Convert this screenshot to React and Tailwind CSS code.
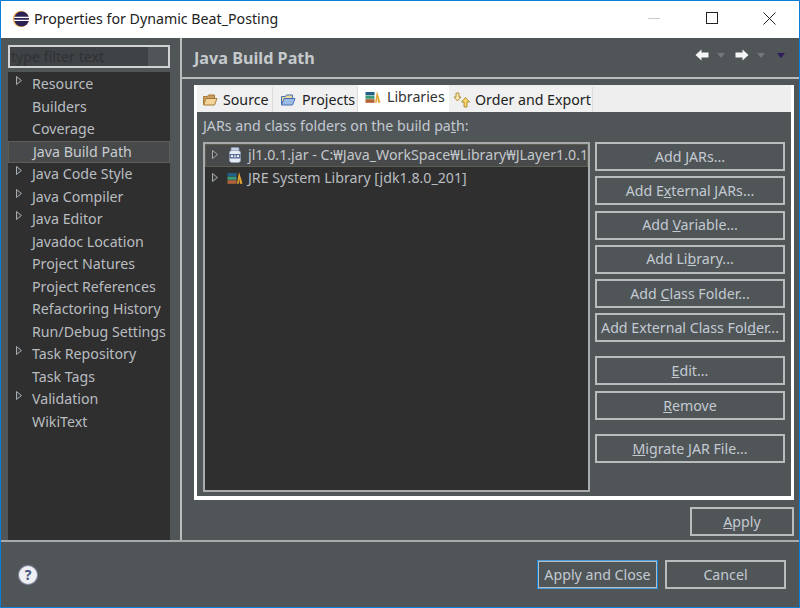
const NAV = [
  { label: 'Resource', arrow: true },
  { label: 'Builders' },
  { label: 'Coverage' },
  { label: 'Java Build Path', active: true },
  { label: 'Java Code Style', arrow: true },
  { label: 'Java Compiler', arrow: true },
  { label: 'Java Editor', arrow: true },
  { label: 'Javadoc Location' },
  { label: 'Project Natures' },
  { label: 'Project References' },
  { label: 'Refactoring History' },
  { label: 'Run/Debug Settings' },
  { label: 'Task Repository', arrow: true },
  { label: 'Task Tags' },
  { label: 'Validation', arrow: true },
  { label: 'WikiText' },
];

function Arrow({ className = '' }) {
  return (
    <svg width="8" height="12" viewBox="0 0 8 12" className={`shrink-0 ${className}`}>
      <path d="M1.500 1.500 L6.500 5.500 L1.500 9.500 Z" fill="#3a3d3f" stroke="#a9adb0" strokeWidth="1" />
    </svg>
  );
}

function EclipseLogo() {
  return (
    <svg width="18" height="18" viewBox="0 0 18 18">
      <circle cx="9" cy="9" r="8" fill="#f2a33c" />
      <circle cx="9.600" cy="9" r="7.400" fill="#2c2255" />
      <path d="M2.200 7.400h14.800M2 10.400h15" stroke="#ffffff" strokeWidth="1.300" />
    </svg>
  );
}

function FolderIcon({ tone }) {
  const open = tone === 'blue' ? '#9cbce8' : '#f3d59c';
  const back = tone === 'blue' ? '#e8d8a0' : '#c9a062';
  const line = tone === 'blue' ? '#4a6fae' : '#a87a3a';
  return (
    <svg width="16" height="16" viewBox="0 0 16 16">
      <path d="M1.500 13V4.500h4l1-1.500h6v3" fill={back} stroke={line} />
      <path d="M1.500 13l2.500-6.500h11L12.500 13Z" fill={open} stroke={line} />
    </svg>
  );
}

function LibIcon() {
  return (
    <svg width="16" height="14" viewBox="0 0 16 14">
      <rect x="0.500" y="2" width="9" height="3.200" fill="#245f8c" />
      <rect x="0.500" y="5.600" width="9" height="3.200" fill="#3c9a78" />
      <rect x="0.500" y="9.200" width="9" height="3.600" fill="#b0623a" />
      <path d="M10 12.800 L12 1 L15.500 12.800 L13 12.800 L12 7 L11.800 12.800 Z" fill="#e9a531" />
    </svg>
  );
}

function JarIcon() {
  return (
    <svg width="14" height="16" viewBox="0 0 14 16">
      <rect x="3" y="0.500" width="8" height="3" rx="1" fill="#c9d3e6" stroke="#8b97b0" strokeWidth="0.700" />
      <rect x="1.500" y="3.500" width="11" height="12" rx="2.500" fill="#e6ecf6" stroke="#9aa7c2" strokeWidth="0.700" />
      <rect x="1.500" y="7" width="11" height="4.500" fill="#5a6f9c" />
      <circle cx="4" cy="9.200" r="1.100" fill="#fff" />
      <rect x="6.400" y="8" width="1.200" height="2.500" fill="#fff" />
      <circle cx="10" cy="9.200" r="1.100" fill="#fff" />
    </svg>
  );
}

function OrderIcon() {
  return (
    <svg width="18" height="16" viewBox="0 0 18 16">
      <path d="M3 1h3v4h2L4.500 9 1 5h2Z" fill="#fbe9b0" stroke="#a8862f" strokeWidth="0.900" />
      <path d="M11 15v-5H8.500L12.500 5.500 16.500 10H14v5Z" fill="#fbd968" stroke="#a8862f" strokeWidth="0.900" />
    </svg>
  );
}

function HelpIcon() {
  return (
    <div className="flex h-[18px] w-[18px] items-center justify-center rounded-full bg-[#eef0f4] text-[14px] leading-none font-bold text-[#46567f] shadow-[0_0_1px_1px_#8a93a8]">
      ?
    </div>
  );
}

function ArrowNav({ flip }) {
  return (
    <svg width="14" height="12" viewBox="0 0 14 12" className={flip ? 'rotate-180' : ''}>
      <path d="M0.500 6 L6.500 0.500 V3.500 H13.500 V8.500 H6.500 V11.500 Z" fill="#f5f5f5" />
    </svg>
  );
}

function Caret({ dark }) {
  return (
    <div className={`h-0 w-0 border-x-[4px] border-t-[5px] border-x-transparent ${dark ? 'border-t-[#2f1a5c]' : 'border-t-[#73787b]'}`} />
  );
}

function Button({ children, className = '' }) {
  return (
    <div className={`flex items-center justify-center border-2 border-[#b9bcbd] text-[#c3cad2] ${className}`}>
      <span>{children}</span>
    </div>
  );
}

function Tab({ icon, label, active, className }) {
  return (
    <div
      className={`flex items-center whitespace-nowrap ${className} ${
        active
          ? 'h-[27px] bg-white pb-[3px] text-[#333]'
          : 'mt-[2px] h-[25px] border-r border-[#dcdcdc] bg-[#f0f0f0] text-[#222]'
      }`}
    >
      {icon}
      <span>{label}</span>
    </div>
  );
}

export default function App() {
  return (
    <div className="flex h-[608px] w-[800px] flex-col overflow-hidden border border-[#0a7fd8] bg-[#505558] font-['Noto_Sans',sans-serif] text-[14.200px] leading-5">
      <header className="flex h-[37px] shrink-0 items-center bg-white pb-px pl-[11px] text-[#222]">
        <EclipseLogo />
        <span className="ml-[4px] text-[14.200px]">Properties for Dynamic Beat_Posting</span>
        <div className="ml-auto flex items-center pb-[2px]">
          <div className="mr-[46px] h-px w-3 bg-[#cccccc]" />
          <div className="mr-[45px] h-[12px] w-[12px] border border-[#222]" />
          <svg width="13" height="13" viewBox="0 0 13 13" className="mr-[23px]">
            <path d="M0.500 0.500L12.500 12.500M12.500 0.500L0.500 12.500" stroke="#222" strokeWidth="1" />
          </svg>
        </div>
      </header>

      <div className="flex h-[504px] shrink-0 border-b-2 border-[#a8aaab]">
        <aside className="flex w-[181px] shrink-0 flex-col border-r-2 border-[#b9bbbc] pl-[7px] pr-[10px] pt-[7px]">
          <div className="flex h-[23px] shrink-0 border-2 border-[#d0d2d3]">
            <div className="w-[138px] bg-[#3f4346] pl-[1px] pt-px leading-[18px] text-[#2f3234]">
              type filter text
            </div>
          </div>
          <nav className="mt-[4px] flex-1 bg-[#2f2f2f] pt-px text-[#b9bdc0]">
            {NAV.map((item) => (
              <div
                key={item.label}
                className={`relative flex h-[22.500px] items-center whitespace-nowrap pl-[24px] ${
                  item.active ? 'border border-[#5c5e54] bg-[#47494a] pl-[23px] text-[#c8ccd0]' : ''
                }`}
              >
                {item.arrow && <Arrow className="absolute left-[7px] top-[2px]" />}
                {item.label}
              </div>
            ))}
          </nav>
        </aside>

        <main className="flex min-w-0 flex-1 flex-col">
          <div className="flex h-[41px] shrink-0 items-center border-b-2 border-[#b9bbbc] pl-[12px] pr-[14px]">
            <span className="pt-px text-[16.200px] font-bold text-[#c6cacd]">Java Build Path</span>
            <div className="ml-auto flex items-center pb-[5px]">
              <ArrowNav />
              <div className="ml-[8px] mr-[10px]">
                <Caret />
              </div>
              <ArrowNav flip />
              <div className="ml-[8px] mr-[12px]">
                <Caret />
              </div>
              <Caret dark />
            </div>
          </div>

          <div className="ml-[12px] mr-[5px] mt-[6px] flex h-[415px] shrink-0 flex-col border-x-[3px] border-b-[4px] border-white bg-white">
            <div className="flex h-[27px] shrink-0 bg-[#eeeeee]">
              <Tab className="w-[76px] gap-[5px] pl-[5px]" icon={<FolderIcon />} label="Source" />
              <Tab className="w-[85px] gap-[6px] pl-[7px]" icon={<FolderIcon tone="blue" />} label="Projects" />
              <Tab className="w-[91px] gap-[6px] pl-[7px]" icon={<LibIcon />} label="Libraries" active />
              <Tab className="w-[144px] gap-[4px] pl-[4px]" icon={<OrderIcon />} label="Order and Export" />
            </div>

            <div className="flex flex-1 flex-col bg-[#505558] pl-[6px] pr-[6px] text-[#c3cad2]">
              <div className="h-[30px] shrink-0 pt-[4px]">
                JARs and class folders on the build pa<u>t</u>h:
              </div>
              <div className="flex flex-1 gap-[5px] pb-[4px]">
                <div className="flex-1 overflow-hidden border-2 border-[#a8aaab] bg-[#2f2f2f] text-[#b9bdc0]">
                  <div className="flex h-[23px] items-center whitespace-nowrap border border-[#5c5e54] bg-[#47494a] pb-px pl-[5px] text-[#c3c7ca]">
                    <Arrow />
                    <span className="ml-[9px]">
                      <JarIcon />
                    </span>
                    <span className="ml-[6px]">jl1.0.1.jar - C:₩Java_WorkSpace₩Library₩JLayer1.0.1</span>
                  </div>
                  <div className="flex h-[22px] items-center whitespace-nowrap pl-[6px]">
                    <Arrow />
                    <span className="ml-[8px]">
                      <LibIcon />
                    </span>
                    <span className="ml-[5px]">JRE System Library [jdk1.8.0_201]</span>
                  </div>
                </div>
                <div className="flex w-[190px] shrink-0 flex-col">
                  <Button className="h-[29px]">Add <u>J</u>ARs...</Button>
                  <Button className="mt-[5.250px] h-[29px]">Add E<u>x</u>ternal JARs...</Button>
                  <Button className="mt-[5.250px] h-[29px]">Add <u>V</u>ariable...</Button>
                  <Button className="mt-[5.250px] h-[29px]">Add Li<u>b</u>rary...</Button>
                  <Button className="mt-[5.250px] h-[29px]">Add <u>C</u>lass Folder...</Button>
                  <Button className="mt-[5.250px] h-[29px]">Add External Class Fol<u>d</u>er...</Button>
                  <Button className="mt-[14px] h-[29px]"><u>E</u>dit...</Button>
                  <Button className="mt-[6px] h-[29px]"><u>R</u>emove</Button>
                  <Button className="mt-[14px] h-[29px]"><u>M</u>igrate JAR File...</Button>
                </div>
              </div>
            </div>
          </div>

          <div className="mr-[5px] mt-[7px] flex justify-end">
            <Button className="h-[29px] w-[104px]"><u>A</u>pply</Button>
          </div>
        </main>
      </div>

      <footer className="flex flex-1 items-center pl-[18px] pr-[13px]">
        <HelpIcon />
        <div className="ml-auto flex gap-[7px]">
          <Button className="h-[29px] w-[121px] border-x-[#0a7fd8] border-y-[#4a9ee0] outline-1 -outline-offset-2 outline-[#b9bcbd]">
            Apply and Close
          </Button>
          <Button className="h-[29px] w-[121px]">Cancel</Button>
        </div>
      </footer>
    </div>
  );
}
